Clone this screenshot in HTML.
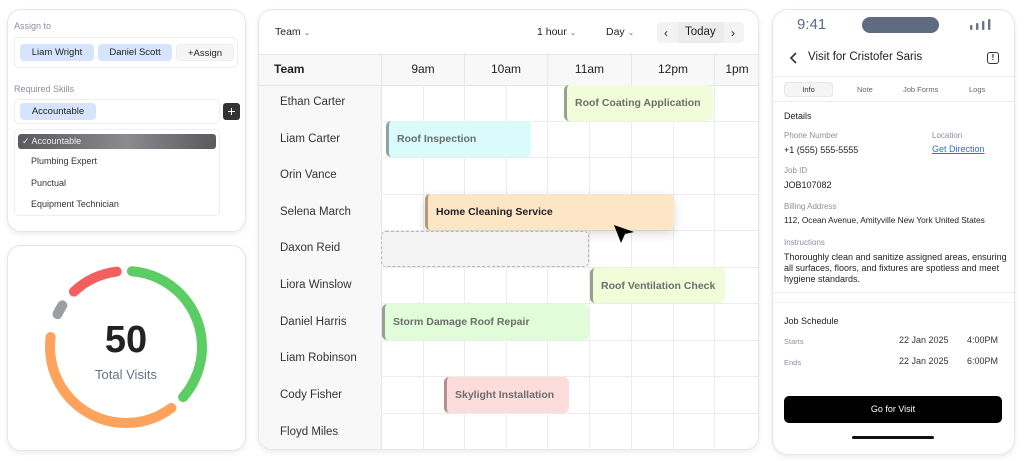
<!DOCTYPE html>
<html><head><meta charset="utf-8"><style>
*{box-sizing:border-box;margin:0;padding:0}
body{width:1024px;height:461px;background:#fff;font-family:"Liberation Sans",sans-serif;position:relative;overflow:hidden;color:#222}
.a{position:absolute}
.card{position:absolute;background:#fff;border:1px solid #e6e6e6;border-radius:14px;box-shadow:0 2px 6px rgba(0,0,0,.08)}
.chip{position:absolute;height:17px;border-radius:4px;font-size:9.5px;line-height:17px;text-align:center;color:#222}
.lbl{font-size:8.5px;color:#8a8f9c}
.vl{position:absolute;top:85px;height:365px;width:1px;background:#ececec}
.hl{position:absolute;left:381px;width:378px;height:1px;background:#ececec}
.name{position:absolute;left:280px;font-size:11.5px;color:#333}
.ev{position:absolute;border-radius:5px;font-size:10.5px;font-weight:bold;color:#6d6d6d;padding-left:8px;display:flex;align-items:center;border-left:3px solid #9aa08f}
.th{position:absolute;top:53px;height:32px;line-height:32px;text-align:center;font-size:12px;color:#222;border-left:1px solid #e6e6e6}
</style></head><body>

<div class="card" style="left:7px;top:9px;width:239px;height:223px"></div>
<div class="a lbl" style="left:14px;top:21px;font-size:9px">Assign to</div>
<div class="a" style="left:14px;top:37px;width:224px;height:31px;border:1px solid #eee;border-radius:5px"></div>
<div class="chip" style="left:20px;top:44px;width:74px;background:#d6e4fd">Liam Wright</div>
<div class="chip" style="left:98px;top:44px;width:74px;background:#d6e4fd">Daniel Scott</div>
<div class="chip" style="left:176px;top:44px;width:58px;background:#f5f5f5;border:1px solid #eee">+Assign</div>
<div class="a lbl" style="left:14px;top:84px;font-size:9px">Required Skills</div>
<div class="a" style="left:14px;top:99px;width:206px;height:25px;border:1px solid #eee;border-radius:5px"></div>
<div class="chip" style="left:20px;top:103px;width:76px;background:#d6e4fd">Accountable</div>
<div class="a" style="left:223px;top:103px;width:17px;height:17px;background:#333;border-radius:3px;color:#fff;font-size:14px;line-height:16px;text-align:center">+</div>
<div class="a" style="left:14px;top:129px;width:206px;height:87px;border:1px solid #eee;border-radius:5px"></div>
<div class="a" style="left:18px;top:134px;width:198px;height:15px;border-radius:3px;background:linear-gradient(90deg,#5a5a5e,#8a8a8f 55%,#5a5a5e);color:#eee;font-size:9px;line-height:15px;padding-left:4px">✓ Accountable</div>
<div class="a" style="left:31px;top:156px;font-size:9px;color:#333">Plumbing Expert</div>
<div class="a" style="left:31px;top:178px;font-size:9px;color:#333">Punctual</div>
<div class="a" style="left:31px;top:199px;font-size:9px;color:#333">Equipment Technician</div>

<div class="card" style="left:7px;top:245px;width:239px;height:206px"></div>
<svg class="a" style="left:0;top:240px" width="256" height="221" viewBox="0 240 256 221">
<g fill="none" stroke-width="10" stroke-linecap="round" transform="rotate(-90 126 347)">
<circle cx="126" cy="347" r="76" stroke="#5ccc64" stroke-dasharray="168 1000" stroke-dashoffset="-6"/>
<circle cx="126" cy="347" r="76" stroke="#fea25c" stroke-dasharray="178 1000" stroke-dashoffset="-190"/>
<circle cx="126" cy="347" r="76" stroke="#9d9ea2" stroke-dasharray="10 1000" stroke-dashoffset="-392"/>
<circle cx="126" cy="347" r="76" stroke="#f35e5e" stroke-dasharray="48 1000" stroke-dashoffset="-420"/>
</g>
<text x="126" y="352" text-anchor="middle" font-family="Liberation Sans" font-weight="bold" font-size="38" fill="#222">50</text>
<text x="126" y="379" text-anchor="middle" font-family="Liberation Sans" font-size="13" fill="#6a7083">Total Visits</text>
</svg>

<div class="card" style="left:258px;top:9px;width:501px;height:441px;overflow:hidden">
<div class="a" style="left:0;top:44px;width:123px;height:400px;background:#f8f8f8"></div>
<div class="a" style="left:0;top:44px;width:501px;height:32px;background:#f8f8f8;border-top:1px solid #e6e6e6;border-bottom:1px solid #e6e6e6"></div>
</div>
<div class="a" style="left:275px;top:26px;font-size:10.5px">Team <span style="font-size:8px;color:#777">⌄</span></div>
<div class="a" style="left:537px;top:26px;font-size:10.5px">1 hour <span style="font-size:8px;color:#777">⌄</span></div>
<div class="a" style="left:606px;top:26px;font-size:10.5px">Day <span style="font-size:8px;color:#777">⌄</span></div>
<div class="a" style="left:657px;top:22px;width:87px;height:21px;background:#f3f3f3;border-radius:4px"></div>
<div class="a" style="left:678px;top:22px;width:46px;height:21px;background:#ececec"></div>
<div class="a" style="left:664px;top:26px;font-size:12px">‹</div>
<div class="a" style="left:685px;top:26px;font-size:11.5px">Today</div>
<div class="a" style="left:731px;top:26px;font-size:12px">›</div>
<div class="a" style="left:274px;top:62px;font-size:12px;font-weight:bold">Team</div>
<div class="th" style="left:381px;width:83px">9am</div>
<div class="th" style="left:464px;width:83px">10am</div>
<div class="th" style="left:547px;width:84px">11am</div>
<div class="th" style="left:631px;width:83px">12pm</div>
<div class="th" style="left:714px;width:45px">1pm</div>
<div class="vl" style="left:381px;background:#e6e6e6"></div>
<div class="vl" style="left:423px"></div><div class="vl" style="left:464px"></div>
<div class="vl" style="left:506px"></div><div class="vl" style="left:547px"></div>
<div class="vl" style="left:589px"></div><div class="vl" style="left:631px"></div>
<div class="vl" style="left:673px"></div><div class="vl" style="left:714px"></div>
<div class="hl" style="top:121px"></div><div class="hl" style="top:157px"></div>
<div class="hl" style="top:194px"></div><div class="hl" style="top:230px"></div>
<div class="hl" style="top:267px"></div><div class="hl" style="top:303px"></div>
<div class="hl" style="top:340px"></div><div class="hl" style="top:376px"></div>
<div class="hl" style="top:413px"></div>
<div class="name" style="top:96px">Ethan Carter</div>
<div class="name" style="top:133px">Liam Carter</div>
<div class="name" style="top:169px">Orin Vance</div>
<div class="name" style="top:206px">Selena March</div>
<div class="name" style="top:242px">Daxon Reid</div>
<div class="name" style="top:279px">Liora Winslow</div>
<div class="name" style="top:316px">Daniel Harris</div>
<div class="name" style="top:352px">Liam Robinson</div>
<div class="name" style="top:389px">Cody Fisher</div>
<div class="name" style="top:426px">Floyd Miles</div>

<div class="ev" style="left:564px;top:85px;width:149px;height:36px;background:#f1fcd9">Roof Coating Application</div>
<div class="ev" style="left:386px;top:121px;width:145px;height:36px;background:#d9fbfc;border-left-color:#8fa3a3">Roof Inspection</div>
<div class="ev" style="left:425px;top:194px;width:249px;height:36px;background:#fde6c6;border-left-color:#b39a78;color:#222;box-shadow:0 4px 10px rgba(0,0,0,.15)">Home Cleaning Service</div>
<div class="a" style="left:381px;top:231px;width:208px;height:36px;background:#f3f3f3;border:1px dashed #b5b5b5;border-radius:5px"></div>
<div class="ev" style="left:590px;top:268px;width:135px;height:35px;background:#f1fcd9">Roof Ventilation Check</div>
<div class="ev" style="left:382px;top:304px;width:207px;height:36px;background:#e0fcd9">Storm Damage Roof Repair</div>
<div class="ev" style="left:444px;top:377px;width:125px;height:36px;background:#fddcdc;border-left-color:#b58f8f">Skylight Installation</div>
<svg class="a" style="left:612px;top:223px" width="24" height="22"><path d="M2 2 L22 9 L13 11 L9 20 Z" fill="#000"/></svg>

<div class="card" style="left:772px;top:9px;width:243px;height:446px;border-radius:16px"></div>
<div class="a" style="left:797px;top:16px;font-size:15px;color:#5f6b80">9:41</div>
<div class="a" style="left:862px;top:17px;width:77px;height:16px;border-radius:8px;background:#5f6b80"></div>
<svg class="a" style="left:968px;top:19px" width="24" height="12"><g fill="#6b7385"><rect x="2" y="6" width="2.4" height="5" rx="1"/><rect x="8" y="4" width="2.4" height="7" rx="1"/><rect x="14" y="2" width="2.4" height="9" rx="1"/><rect x="20" y="0" width="2.4" height="11" rx="1"/></g></svg>
<svg class="a" style="left:788px;top:51px" width="12" height="14"><path d="M8 2 L3 7 L8 12" fill="none" stroke="#333" stroke-width="1.6"/></svg>
<div class="a" style="left:808px;top:51px;font-size:11.5px;color:#222">Visit for Cristofer Saris</div>
<div class="a" style="left:987px;top:52px;width:12px;height:12px;border:1.4px solid #333;border-radius:3px;font-size:8px;font-weight:bold;line-height:10px;text-align:center">!</div>
<div class="a" style="left:773px;top:76px;width:241px;height:1px;background:#eee"></div>
<div class="a" style="left:784px;top:82px;width:49px;height:15px;border-radius:4px;background:#f5f5f5;border:1px solid #e8e8e8;font-size:7.5px;text-align:center;line-height:13px;color:#333">Info</div>
<div class="a" style="left:857px;top:85px;font-size:7.5px;color:#666">Note</div>
<div class="a" style="left:903px;top:85px;font-size:7.5px;color:#666">Job Forms</div>
<div class="a" style="left:969px;top:85px;font-size:7.5px;color:#666">Logs</div>
<div class="a" style="left:773px;top:101px;width:241px;height:1px;background:#eee"></div>
<div class="a" style="left:784px;top:111px;font-size:9px;color:#222">Details</div>
<div class="a lbl" style="left:784px;top:131px;font-size:8px">Phone Number</div>
<div class="a" style="left:784px;top:145px;font-size:9px">+1 (555) 555-5555</div>
<div class="a lbl" style="left:932px;top:131px;font-size:8px">Location</div>
<div class="a" style="left:932px;top:144px;font-size:9px;color:#2a6ee8;text-decoration:underline">Get Direction</div>
<div class="a lbl" style="left:784px;top:166px;font-size:8px">Job ID</div>
<div class="a" style="left:784px;top:180px;font-size:9px">JOB107082</div>
<div class="a lbl" style="left:784px;top:202px;font-size:8px">Billing Address</div>
<div class="a" style="left:784px;top:215px;font-size:8.3px">112, Ocean Avenue, Amityville New York United States</div>
<div class="a lbl" style="left:784px;top:238px;font-size:8px">Instructions</div>
<div class="a" style="left:784px;top:252px;font-size:9px;line-height:11px;width:225px">Thoroughly clean and sanitize assigned areas, ensuring all surfaces, floors, and fixtures are spotless and meet hygiene standards.</div>
<div class="a" style="left:773px;top:292px;width:241px;height:1px;background:#eee"></div>
<div class="a" style="left:773px;top:302px;width:241px;height:1px;background:#f3f3f3"></div>
<div class="a" style="left:784px;top:316px;font-size:9px">Job Schedule</div>
<div class="a lbl" style="left:784px;top:337px;font-size:7.5px">Starts</div>
<div class="a" style="left:899px;top:335px;font-size:9px;color:#333">22 Jan 2025</div>
<div class="a" style="left:967px;top:335px;font-size:9px;color:#333">4:00PM</div>
<div class="a lbl" style="left:784px;top:358px;font-size:7.5px">Ends</div>
<div class="a" style="left:899px;top:356px;font-size:9px;color:#333">22 Jan 2025</div>
<div class="a" style="left:967px;top:356px;font-size:9px;color:#333">6:00PM</div>
<div class="a" style="left:784px;top:396px;width:218px;height:27px;background:#000;border-radius:5px;color:#fff;font-size:9px;text-align:center;line-height:27px">Go for Visit</div>
<div class="a" style="left:852px;top:436px;width:82px;height:3px;background:#111;border-radius:2px"></div>
</body></html>
